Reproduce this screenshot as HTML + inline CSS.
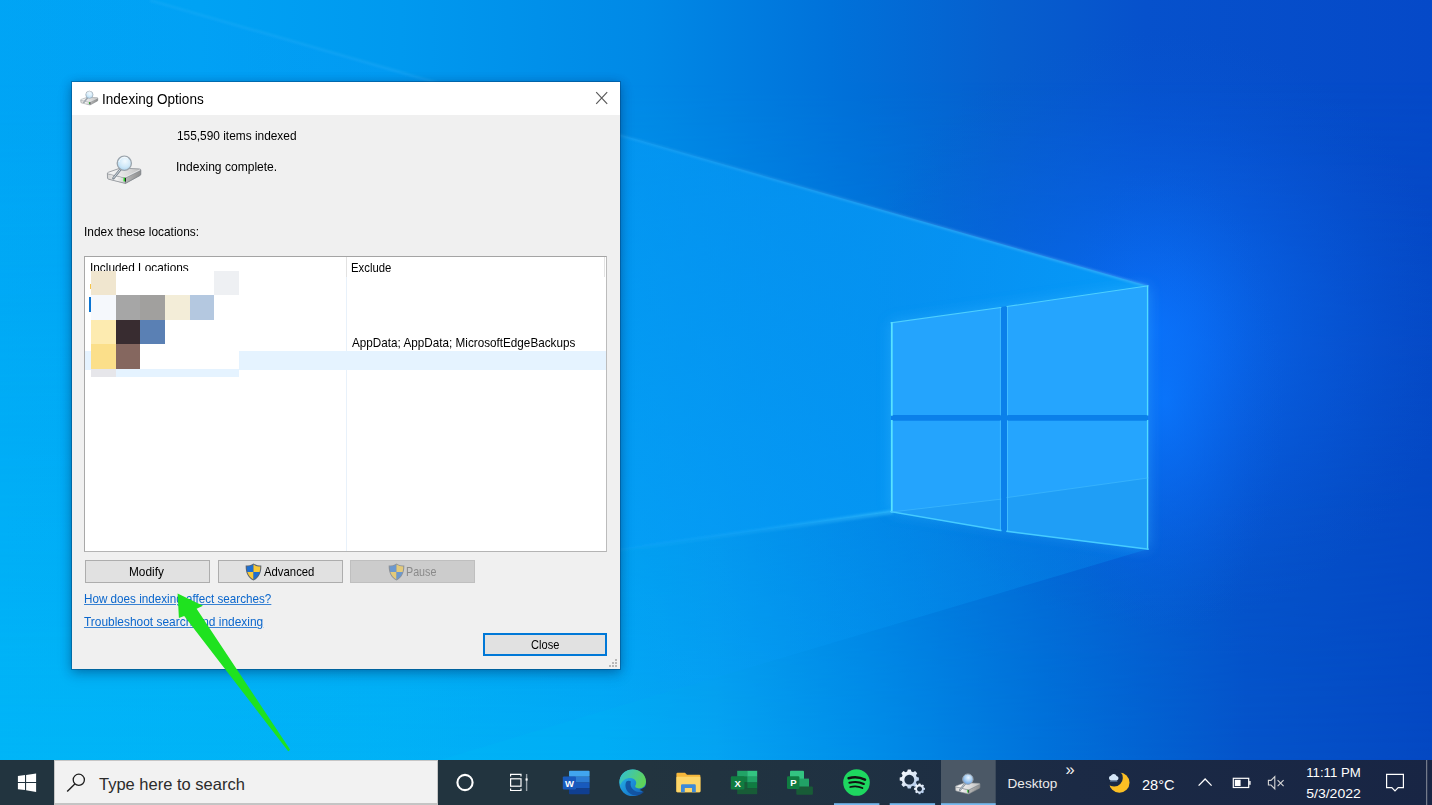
<!DOCTYPE html>
<html lang="en">
<head>
<meta charset="utf-8">
<title>Indexing Options</title>
<style>
html,body{margin:0;padding:0;}
body{width:1432px;height:805px;overflow:hidden;position:relative;background:#0a78dc;font-family:"Liberation Sans",sans-serif;color:#000;}
.abs{position:absolute;}
#wall{position:absolute;left:0;top:0;width:1432px;height:805px;display:block;}
/* ---------- dialog ---------- */
#dlg{position:absolute;left:72px;top:82px;width:548px;height:586.5px;background:#f0f0f0;box-shadow:0 0 0 1px rgba(0,55,105,.38),0 2px 10px rgba(0,40,90,.40),0 5px 14px rgba(0,40,90,.18);}
#ttl{position:absolute;left:-1px;top:-1px;width:548px;height:33px;background:#fff;}
#ttl .cap{position:absolute;left:29.6px;top:9px;font-size:14px;line-height:16px;white-space:nowrap;color:#000;transform-origin:0 50%;transform:scaleX(.968);}
.t{position:absolute;white-space:nowrap;font-size:12.6px;line-height:15px;color:#000;transform-origin:0 50%;}
#list{position:absolute;left:11px;top:173px;width:523px;height:296px;box-sizing:border-box;border:1px solid;border-color:#a4a4a4 #bcbcbc #b4b4b4 #a8a8a8;background:#fff;overflow:hidden;}
.btn{position:absolute;box-sizing:border-box;height:23px;top:477px;width:125px;background:#e1e1e1;border:1px solid #adadad;}
.btn span{position:absolute;white-space:nowrap;font-size:12.6px;line-height:15px;top:4px;transform-origin:0 50%;}
.lnk{color:#0a66cc;text-decoration:underline;text-underline-offset:1px;text-decoration-thickness:1px;text-decoration-color:rgba(10,102,204,.8);}
/* ---------- taskbar ---------- */
#tb{position:absolute;left:0;top:760px;width:1432px;height:45px;background:linear-gradient(90deg,#22343f 0,#22343f 45%,#1f3142 60%,#1b2a45 75%,#182544 100%);}
#srch{position:absolute;left:54px;top:0;width:384px;height:45px;background:#f2f2f2;box-sizing:border-box;border:1px solid #c6c6c6;border-bottom:2px solid #c4c4c4;}
#srch span{position:absolute;left:44px;top:13px;font-size:16.5px;line-height:20px;color:#2b2b2b;white-space:nowrap;}
.tw{position:absolute;color:#fff;white-space:nowrap;}
</style>
</head>
<body>
<!-- WALLPAPER -->
<svg id="wall" viewBox="0 0 1432 805" width="1432" height="805">
<defs>
<linearGradient id="gtop" x1="0" y1="0" x2="1432" y2="0" gradientUnits="userSpaceOnUse">
<stop offset="0" stop-color="#00a5f5"/>
<stop offset="0.14" stop-color="#00a2f4"/>
<stop offset="0.28" stop-color="#0099ef"/>
<stop offset="0.45" stop-color="#0089e6"/>
<stop offset="0.58" stop-color="#0072da"/>
<stop offset="0.70" stop-color="#065fce"/>
<stop offset="0.80" stop-color="#0651cc"/>
<stop offset="1" stop-color="#0549c8"/>
</linearGradient>
<linearGradient id="gray1" x1="150" y1="0" x2="1148" y2="0" gradientUnits="userSpaceOnUse">
<stop offset="0" stop-color="#7fd4ff" stop-opacity="0.10"/>
<stop offset="0.5" stop-color="#7fd4ff" stop-opacity="0.16"/>
<stop offset="1" stop-color="#7fd4ff" stop-opacity="0.40"/>
</linearGradient>
<linearGradient id="gbot" x1="0" y1="0" x2="1432" y2="0" gradientUnits="userSpaceOnUse">
<stop offset="0" stop-color="#00b6f7"/>
<stop offset="0.28" stop-color="#00b4f6"/>
<stop offset="0.42" stop-color="#00aef5"/>
<stop offset="0.50" stop-color="#04a4f2"/>
<stop offset="0.60" stop-color="#0090ea"/>
<stop offset="0.73" stop-color="#0072da"/>
<stop offset="0.87" stop-color="#0454ca"/>
<stop offset="1" stop-color="#0448c2"/>
</linearGradient>
<linearGradient id="abot" x1="0" y1="0" x2="0" y2="805" gradientUnits="userSpaceOnUse">
<stop offset="0.10" stop-color="#fff" stop-opacity="0"/>
<stop offset="0.95" stop-color="#fff" stop-opacity="1"/>
</linearGradient>
<mask id="mbot"><rect width="1432" height="805" fill="url(#abot)"/></mask>
<radialGradient id="glow" cx="1155" cy="330" r="300" gradientUnits="userSpaceOnUse">
<stop offset="0" stop-color="#0a74ff" stop-opacity="0.9"/>
<stop offset="0.35" stop-color="#0a6af2" stop-opacity="0.55"/>
<stop offset="0.7" stop-color="#0a60e6" stop-opacity="0.25"/>
<stop offset="1" stop-color="#0a58d0" stop-opacity="0"/>
</radialGradient>
<linearGradient id="gwall" x1="0" y1="0" x2="1148" y2="0" gradientUnits="userSpaceOnUse">
<stop offset="0" stop-color="#069cf8" stop-opacity="0.05"/>
<stop offset="0.13" stop-color="#069cf8" stop-opacity="0.12"/>
<stop offset="0.54" stop-color="#069cf8" stop-opacity="0.55"/>
<stop offset="1" stop-color="#069cf8" stop-opacity="0.95"/>
</linearGradient>
<linearGradient id="gfloor" x1="0" y1="0" x2="1148" y2="0" gradientUnits="userSpaceOnUse">
<stop offset="0" stop-color="#069cf8" stop-opacity="0.03"/>
<stop offset="0.3" stop-color="#069cf8" stop-opacity="0.08"/>
<stop offset="0.55" stop-color="#069cf8" stop-opacity="0.22"/>
<stop offset="0.8" stop-color="#069cf8" stop-opacity="0.28"/>
<stop offset="1" stop-color="#069cf8" stop-opacity="0.28"/>
</linearGradient>
<filter id="b1" filterUnits="userSpaceOnUse" x="0" y="-10" width="1432" height="320"><feGaussianBlur stdDeviation="0.9"/></filter>
<radialGradient id="glow2" cx="0.5" cy="0.5" r="0.5"><stop offset="0" stop-color="#0a78ff" stop-opacity="0.75"/><stop offset="0.5" stop-color="#0a6cf4" stop-opacity="0.35"/><stop offset="1" stop-color="#0a60e0" stop-opacity="0"/></radialGradient>
<linearGradient id="gfl" x1="893" y1="0" x2="560" y2="0" gradientUnits="userSpaceOnUse"><stop offset="0" stop-color="#4fd0ff" stop-opacity="0.7"/><stop offset="0.4" stop-color="#3cc0ff" stop-opacity="0.3"/><stop offset="1" stop-color="#30b8ff" stop-opacity="0.05"/></linearGradient>
<filter id="b1f" filterUnits="userSpaceOnUse" x="500" y="480" width="450" height="120"><feGaussianBlur stdDeviation="1.6"/></filter>
<filter id="b8" x="-20%" y="-20%" width="140%" height="140%"><feGaussianBlur stdDeviation="7"/></filter>
</defs>
<rect width="1432" height="805" fill="url(#gtop)"/>
<rect width="1432" height="805" fill="url(#gbot)" mask="url(#mbot)"/>
<rect x="800" y="0" width="632" height="700" fill="url(#glow)"/>
<ellipse cx="1165" cy="400" rx="120" ry="240" fill="url(#glow2)"/>
<!-- lit wall -->
<polygon points="1148,286 150,0 0,0 0,637 891,512 1007,531 1148,549" fill="url(#gwall)"/>
<path d="M150 0.4 L1148 286.4" stroke="url(#gray1)" stroke-width="2.4" fill="none" filter="url(#b1)"/>
<!-- lit floor -->
<path d="M893 512 L560 558.6" stroke="url(#gfl)" stroke-width="3" fill="none" filter="url(#b1f)"/>
<polygon points="891,512 0,637 0,805 290,805 620,706 1148,549 1007,531" fill="url(#gfloor)"/>
<!-- logo glow -->
<g filter="url(#b8)" opacity="0.5">
<polygon points="891,323 1148,286 1148,549 891,511" fill="#38b4ff"/>
</g>
<!-- logo panes -->
<polygon points="1000.5,307 1007.2,306 1007.2,531.5 1000.5,530.5" fill="#0a80ea"/>
<polygon points="891,414.8 1148,414.8 1148,420.9 891,420.9" fill="#0a80ea"/>
<polygon points="891,323 1000.8,307.6 1000.8,414.9 891,414.9" fill="#24a4fd"/>
<polygon points="1007,306.6 1148,286 1148,414.9 1007,414.9" fill="#25a5fe"/>
<polygon points="891,420.8 1000.8,420.8 1000.8,530.3 891,511.6" fill="#24a4fd"/>
<polygon points="1007,420.8 1148,420.8 1148,549 1007,531.2" fill="#25a5fe"/>
<polygon points="891.5,512 1000.8,499.2 1000.8,530.3" fill="#1f9ef6"/>
<polygon points="1007,497.6 1148,478 1148,549 1007,531.2" fill="#1f9ef6"/>
<g fill="none" stroke-linecap="square">
<path d="M891.8 323 V414.9 M891.8 420.8 V511.6" stroke="#58e2ff" stroke-width="1.8"/>
<path d="M1007.5 306.6 V414.9 M1007.5 420.8 V531" stroke="#4fc8ff" stroke-width="1" stroke-opacity="0.7"/>
<path d="M1000.4 307.8 V414.9 M1000.4 420.8 V530" stroke="#4fc8ff" stroke-width="0.9" stroke-opacity="0.7"/>
<path d="M1147.6 286.2 V414.9 M1147.6 420.8 V548.8" stroke="#58e2ff" stroke-width="1.4" stroke-opacity="0.9"/>
<path d="M891 511.7 L1000.8 530.4 M1007 531.3 L1148 549.1" stroke="#46ccff" stroke-width="1.5"/>
<path d="M891 322.9 L1000.8 307.5 M1007 306.5 L1148 285.9" stroke="#58d8ff" stroke-width="1.1" stroke-opacity="0.85"/>
<path d="M891.5 512 L1000.8 499.2 M1007 497.6 L1148 478" stroke="#46c0ff" stroke-width="0.9" stroke-opacity="0.6"/>
</g>
</svg>

<!-- DIALOG -->
<div id="dlg"><div class="abs" style="left:1px;top:1px;width:546px;height:584px">
  <div id="ttl">
    <svg class="abs" style="left:5px;top:4.5px" width="25.5" height="21.4" viewBox="0 0 50 42">
<defs>
<linearGradient id="dt" x1="0" y1="0" x2="1" y2="0"><stop offset="0" stop-color="#fafafa"/><stop offset="0.6" stop-color="#dcdcdc"/><stop offset="1" stop-color="#bdbdbd"/></linearGradient>
<linearGradient id="df" x1="0" y1="0" x2="1" y2="0"><stop offset="0" stop-color="#d4d4d4"/><stop offset="0.5" stop-color="#f2f2f2"/><stop offset="1" stop-color="#cfcfcf"/></linearGradient>
<linearGradient id="ds" x1="0" y1="0" x2="1" y2="0"><stop offset="0" stop-color="#b8b8b8"/><stop offset="1" stop-color="#8e8e8e"/></linearGradient>
<radialGradient id="dl" cx="0.55" cy="0.35" r="0.7"><stop offset="0" stop-color="#f2faff"/><stop offset="0.6" stop-color="#cfe8f8"/><stop offset="1" stop-color="#a9d3f0"/></radialGradient>
</defs>
<path d="M7.6 30.6 L7 26 Q7 25 8.5 24.4 L19 20.6 Q20.5 20.2 22 20.3 L39 21 Q41 21.2 41 22.6 L41 26 Q41 27 39.6 27.8 L27 35 Q25.6 35.8 24 35.4 L9 31.6 Q7.8 31.3 7.6 30.6 Z" fill="#9a9a9a" opacity="0.55"/>
<path d="M7.4 25.6 L25.4 29.8 L25.4 35.4 L8.6 31.2 Q7.6 30.9 7.5 30 Z" fill="url(#df)" stroke="#8b9197" stroke-width="0.8" stroke-linejoin="round"/>
<path d="M25.4 29.8 L40.8 22 L40.8 26.2 Q40.8 27 40 27.5 L25.4 35.4 Z" fill="url(#ds)" stroke="#7f858b" stroke-width="0.8" stroke-linejoin="round"/>
<path d="M7.4 25.4 Q7.2 24.8 8.6 24.2 L19 20.5 Q20.3 20.1 22 20.2 L39.2 20.9 Q40.9 21 40.8 22 L25.4 29.8 Z" fill="url(#dt)" stroke="#8b9197" stroke-width="0.8" stroke-linejoin="round"/>
<path d="M8.2 25.3 L25.3 29.3 L40.2 21.8" fill="none" stroke="#fff" stroke-width="0.7" opacity="0.9"/>
<rect x="23.5" y="29.6" width="1.5" height="3.8" fill="#22d422"/><rect x="25" y="29.8" width="1" height="3.8" fill="#222"/>
<path d="M20.6 21.2 L13.4 30.2" stroke="#7c8791" stroke-width="2.6" stroke-linecap="round"/>
<path d="M20.4 21.4 L13.6 29.9" stroke="#cfd6dc" stroke-width="1" stroke-linecap="round"/>
<circle cx="24.3" cy="15.2" r="7.1" fill="url(#dl)" stroke="#9aa3ab" stroke-width="1.3"/>
<path d="M19 14 A5.6 5.6 0 0 1 28 10.4" fill="none" stroke="#fff" stroke-width="1" opacity="0.8"/>
</svg>
    <span class="cap">Indexing Options</span>
    <svg class="abs" style="left:523px;top:9px" width="14" height="14" viewBox="0 0 14 14"><path d="M1.2 1.2 L12.2 12.8 M12.2 1.2 L1.2 12.8" stroke="#5a5a5a" stroke-width="1.2" fill="none"/></svg>
  </div>
  <svg class="abs" style="left:27px;top:65px" width="50" height="42" viewBox="0 0 50 42">

<path d="M7.6 30.6 L7 26 Q7 25 8.5 24.4 L19 20.6 Q20.5 20.2 22 20.3 L39 21 Q41 21.2 41 22.6 L41 26 Q41 27 39.6 27.8 L27 35 Q25.6 35.8 24 35.4 L9 31.6 Q7.8 31.3 7.6 30.6 Z" fill="#9a9a9a" opacity="0.55"/>
<path d="M7.4 25.6 L25.4 29.8 L25.4 35.4 L8.6 31.2 Q7.6 30.9 7.5 30 Z" fill="url(#df)" stroke="#8b9197" stroke-width="0.8" stroke-linejoin="round"/>
<path d="M25.4 29.8 L40.8 22 L40.8 26.2 Q40.8 27 40 27.5 L25.4 35.4 Z" fill="url(#ds)" stroke="#7f858b" stroke-width="0.8" stroke-linejoin="round"/>
<path d="M7.4 25.4 Q7.2 24.8 8.6 24.2 L19 20.5 Q20.3 20.1 22 20.2 L39.2 20.9 Q40.9 21 40.8 22 L25.4 29.8 Z" fill="url(#dt)" stroke="#8b9197" stroke-width="0.8" stroke-linejoin="round"/>
<path d="M8.2 25.3 L25.3 29.3 L40.2 21.8" fill="none" stroke="#fff" stroke-width="0.7" opacity="0.9"/>
<rect x="23.5" y="29.6" width="1.5" height="3.8" fill="#22d422"/><rect x="25" y="29.8" width="1" height="3.8" fill="#222"/>
<path d="M20.6 21.2 L13.4 30.2" stroke="#7c8791" stroke-width="2.6" stroke-linecap="round"/>
<path d="M20.4 21.4 L13.6 29.9" stroke="#cfd6dc" stroke-width="1" stroke-linecap="round"/>
<circle cx="24.3" cy="15.2" r="7.1" fill="url(#dl)" stroke="#9aa3ab" stroke-width="1.3"/>
<path d="M19 14 A5.6 5.6 0 0 1 28 10.4" fill="none" stroke="#fff" stroke-width="1" opacity="0.8"/>
</svg>
  <div class="t" style="left:104px;top:45.5px;transform:scaleX(.943)">155,590 items indexed</div>
  <div class="t" style="left:103px;top:77px;transform:scaleX(.957)">Indexing complete.</div>
  <div class="t" style="left:10.7px;top:142px;transform:scaleX(.944)">Index these locations:</div>
  <div id="list">
    <div class="abs" style="left:261px;top:0;width:1px;height:294px;background:#e8f1fa"></div>
    <div class="abs" style="left:261px;top:0;width:1px;height:20px;background:#e2e2e2"></div>
    <div class="abs" style="left:519px;top:0;width:1px;height:20px;background:#e2e2e2"></div>
    <div class="abs" style="left:0;top:94px;width:521px;height:18.5px;background:#e5f3ff"></div>
    <div class="t" style="left:4.5px;top:4px;transform:scaleX(.94)">Included Locations</div>
    <div class="t" style="left:265.7px;top:4px;transform:scaleX(.90)">Exclude</div>
    <div class="t" style="left:267px;top:79px;transform:scaleX(.93)">AppData; AppData; MicrosoftEdgeBackups</div>
    <div class="abs" style="left:4.5px;top:27px;width:2px;height:5px;background:#f6c54a"></div>
    <div class="abs" style="left:4px;top:40px;width:3px;height:15px;background:#0a74d2"></div>
    <div class="abs" style="left:6.1px;top:13.6px;width:25.0px;height:24.7px;background:#f0e6cf"></div>
    <div class="abs" style="left:30.8px;top:13.6px;width:24.5px;height:24.7px;background:#ffffff"></div>
    <div class="abs" style="left:55.0px;top:13.6px;width:25.2px;height:24.7px;background:#ffffff"></div>
    <div class="abs" style="left:79.9px;top:13.6px;width:24.9px;height:24.7px;background:#ffffff"></div>
    <div class="abs" style="left:104.5px;top:13.6px;width:24.9px;height:24.7px;background:#ffffff"></div>
    <div class="abs" style="left:129.1px;top:13.6px;width:25.0px;height:24.7px;background:#eef0f3"></div>
    <div class="abs" style="left:6.1px;top:38.0px;width:25.0px;height:24.9px;background:#f5f8fc"></div>
    <div class="abs" style="left:30.8px;top:38.0px;width:24.5px;height:24.9px;background:#a6a6a6"></div>
    <div class="abs" style="left:55.0px;top:38.0px;width:25.2px;height:24.9px;background:#a1a09e"></div>
    <div class="abs" style="left:79.9px;top:38.0px;width:24.9px;height:24.9px;background:#f3edd8"></div>
    <div class="abs" style="left:104.5px;top:38.0px;width:24.9px;height:24.9px;background:#b4c8e0"></div>
    <div class="abs" style="left:129.1px;top:38.0px;width:25.0px;height:24.9px;background:#ffffff"></div>
    <div class="abs" style="left:6.1px;top:62.6px;width:25.0px;height:24.8px;background:#fdebb0"></div>
    <div class="abs" style="left:30.8px;top:62.6px;width:24.5px;height:24.8px;background:#382c30"></div>
    <div class="abs" style="left:55.0px;top:62.6px;width:25.2px;height:24.8px;background:#5a80b4"></div>
    <div class="abs" style="left:79.9px;top:62.6px;width:24.9px;height:24.8px;background:#ffffff"></div>
    <div class="abs" style="left:104.5px;top:62.6px;width:24.9px;height:24.8px;background:#ffffff"></div>
    <div class="abs" style="left:129.1px;top:62.6px;width:25.0px;height:24.8px;background:#ffffff"></div>
    <div class="abs" style="left:6.1px;top:87.1px;width:25.0px;height:25.1px;background:#fbdf8a"></div>
    <div class="abs" style="left:30.8px;top:87.1px;width:24.5px;height:25.1px;background:#85675f"></div>
    <div class="abs" style="left:55.0px;top:87.1px;width:25.2px;height:25.1px;background:#ffffff"></div>
    <div class="abs" style="left:79.9px;top:87.1px;width:24.9px;height:25.1px;background:#ffffff"></div>
    <div class="abs" style="left:104.5px;top:87.1px;width:24.9px;height:25.1px;background:#ffffff"></div>
    <div class="abs" style="left:129.1px;top:87.1px;width:25.0px;height:25.1px;background:#ffffff"></div>
    <div class="abs" style="left:6.1px;top:111.9px;width:25.0px;height:8.2px;background:#e6e6ea"></div>
    <div class="abs" style="left:30.8px;top:111.9px;width:24.5px;height:8.2px;background:#e5f3ff"></div>
    <div class="abs" style="left:55.0px;top:111.9px;width:25.2px;height:8.2px;background:#e5f3ff"></div>
    <div class="abs" style="left:79.9px;top:111.9px;width:24.9px;height:8.2px;background:#e5f3ff"></div>
    <div class="abs" style="left:104.5px;top:111.9px;width:24.9px;height:8.2px;background:#e5f3ff"></div>
    <div class="abs" style="left:129.1px;top:111.9px;width:25.0px;height:8.2px;background:#e5f3ff"></div>
  </div>
  <div class="btn" style="left:12px;"><span style="left:43px;transform:scaleX(.94)">Modify</span></div>
  <div class="btn" style="left:145px;"><svg class="abs" style="left:26px;top:2px;opacity:1" width="17" height="18" viewBox="0 0 17 18">
<path d="M8.5 0.4 C6.4 1.9 3.6 2.6 0.7 2.6 C0.5 9.2 2.6 14.6 8.5 17.6 C14.4 14.6 16.5 9.2 16.3 2.6 C13.4 2.6 10.6 1.9 8.5 0.4 Z" fill="#5b6470"/>
<path d="M8.5 1.6 C6.5 2.9 4.2 3.5 1.7 3.6 C1.7 5.6 1.9 7.4 2.4 9 L8.5 9 Z" fill="#1e6fd2"/>
<path d="M8.5 1.6 C10.5 2.9 12.8 3.5 15.3 3.6 C15.3 5.6 15.1 7.4 14.6 9 L8.5 9 Z" fill="#f7c938"/>
<path d="M2.4 9 C3.3 12.2 5.2 14.7 8.5 16.4 L8.5 9 Z" fill="#f7c938"/>
<path d="M14.6 9 C13.7 12.2 11.8 14.7 8.5 16.4 L8.5 9 Z" fill="#1e6fd2"/>
</svg><span style="left:45px;transform:scaleX(.90)">Advanced</span></div>
  <div class="btn" style="left:277px;background:#ccc;border-color:#bfbfbf;"><svg class="abs" style="left:37px;top:2px;opacity:0.55" width="17" height="18" viewBox="0 0 17 18">
<path d="M8.5 0.4 C6.4 1.9 3.6 2.6 0.7 2.6 C0.5 9.2 2.6 14.6 8.5 17.6 C14.4 14.6 16.5 9.2 16.3 2.6 C13.4 2.6 10.6 1.9 8.5 0.4 Z" fill="#5b6470"/>
<path d="M8.5 1.6 C6.5 2.9 4.2 3.5 1.7 3.6 C1.7 5.6 1.9 7.4 2.4 9 L8.5 9 Z" fill="#1e6fd2"/>
<path d="M8.5 1.6 C10.5 2.9 12.8 3.5 15.3 3.6 C15.3 5.6 15.1 7.4 14.6 9 L8.5 9 Z" fill="#f7c938"/>
<path d="M2.4 9 C3.3 12.2 5.2 14.7 8.5 16.4 L8.5 9 Z" fill="#f7c938"/>
<path d="M14.6 9 C13.7 12.2 11.8 14.7 8.5 16.4 L8.5 9 Z" fill="#1e6fd2"/>
</svg><span style="left:55px;color:#8a8a8a;transform:scaleX(.85)">Pause</span></div>
  <div class="t lnk" style="left:11px;top:509px;transform:scaleX(.927)">How does indexing affect searches?</div>
  <div class="t lnk" style="left:11px;top:532px;transform:scaleX(.947)">Troubleshoot search and indexing</div>
  <div class="btn" style="left:410px;top:550px;width:124px;border:2px solid #0078d7;"><span style="left:45.5px;top:3px;transform:scaleX(.88)">Close</span></div>
  <svg class="abs" style="left:535px;top:575px" width="10" height="10" viewBox="0 0 10 10"><g fill="#b8b8b8"><rect x="7" y="1" width="2" height="2"/><rect x="4" y="4" width="2" height="2"/><rect x="7" y="4" width="2" height="2"/><rect x="1" y="7" width="2" height="2"/><rect x="4" y="7" width="2" height="2"/><rect x="7" y="7" width="2" height="2"/></g></svg>
</div></div>
<!-- ARROW -->
<svg class="abs" style="left:0;top:0" width="1432" height="805" viewBox="0 0 1432 805">
<polygon points="177.6,593.6 203,605.8 196.6,608.8 290.2,749.8 288.2,751.2 184.2,616 178.9,618" fill="#1fe21f"/>
</svg>

<!-- TASKBAR -->
<div id="tb">
  <!-- start -->
  <svg class="abs" style="left:0;top:0" width="54" height="45" viewBox="0 760 54 45"><g fill="#fff">
  <polygon points="17.9,776 25,775.05 25,782.1 17.9,782.1"/><polygon points="26.1,774.9 36.1,773.5 36.1,782.1 26.1,782.1"/>
  <polygon points="17.9,783.1 25,783.1 25,790.1 17.9,789.2"/><polygon points="26.1,783.1 36.1,783.1 36.1,792 26.1,790.3"/></g></svg>
  <div id="srch">
    <svg class="abs" style="left:-1px;top:0" width="45" height="44" viewBox="54 761 45 44"><circle cx="78.8" cy="779.8" r="5.6" fill="none" stroke="#1c1c1c" stroke-width="1.3"/><path d="M74.8 784 L67.2 791.4" stroke="#1c1c1c" stroke-width="1.4" fill="none"/></svg>
    <span>Type here to search</span>
  </div>
  <!-- icons drawn in absolute page coords -->
  <svg class="abs" style="left:438px;top:0" width="994" height="45" viewBox="438 760 994 45">
  <defs>
   <linearGradient id="edg" x1="0" y1="0" x2="1" y2="1"><stop offset="0" stop-color="#2cc1e8"/><stop offset="0.5" stop-color="#1b8fd8"/><stop offset="1" stop-color="#1559b4"/></linearGradient>
   <linearGradient id="edg2" x1="0" y1="0" x2="1" y2="0.4"><stop offset="0" stop-color="#2fbfd9"/><stop offset="1" stop-color="#5fd35a"/></linearGradient>
   <linearGradient id="gear" x1="0" y1="0" x2="1" y2="1"><stop offset="0" stop-color="#ffffff"/><stop offset="0.6" stop-color="#d6e3f4"/><stop offset="1" stop-color="#8fb2e0"/></linearGradient>
  </defs>
  <!-- cortana -->
  <circle cx="465" cy="782.5" r="7.6" fill="none" stroke="#fff" stroke-width="2.1"/>
  <!-- task view -->
  <g fill="none" stroke="#fff" stroke-width="1.2"><rect x="510.6" y="778.8" width="10.4" height="7.4"/><path d="M510.6 776.6 V774.4 H521 V776.6 M510.6 788.4 V790.5 H521 V788.4"/></g>
  <path d="M526.6 774 V791" stroke="#9aa3aa" stroke-width="1.4"/><rect x="525.6" y="778.4" width="2" height="2.2" fill="#fff"/>
  <!-- word -->
  <rect x="569" y="770.8" width="20.6" height="6" rx="1" fill="#41a5ee"/><rect x="569" y="776.6" width="20.6" height="6" fill="#2b7cd3"/><rect x="569" y="782.4" width="20.6" height="6" fill="#185abd"/><rect x="569" y="788.2" width="20.6" height="6" rx="1" fill="#103f91"/>
  <rect x="562.8" y="776.4" width="13.2" height="13" rx="1.2" fill="#185abd"/>
  <text x="569.4" y="786.6" font-family="Liberation Sans, sans-serif" font-size="9.5" font-weight="bold" fill="#fff" text-anchor="middle">W</text>
  <!-- edge -->
  <circle cx="632.6" cy="782.8" r="13.3" fill="url(#edg)"/>
  <path d="M619.6 780 C621 772.5 627 769.4 633 769.5 C640.5 769.6 646 775 646 781.5 C646 786 642.5 788.4 639 788.4 C636 788.4 634.6 787 635.4 785.6 C636.6 784 636.6 781.6 635 780 C632.6 777.6 628 777.4 624.6 779.6 C622.6 781 621 783 620.4 785 C619.6 783.4 619.4 781.6 619.6 780 Z" fill="url(#edg2)"/>
  <path d="M626.4 781.4 C624.6 784.6 625.4 789.4 628.6 792.4 C631 794.6 634 795.6 637 795.4 C640.6 795 643.6 793 645 790.4 C642 792.4 637.6 792.4 634.4 790.4 C631 788.2 629.8 784.4 631 781.4 C629.6 780.4 627.6 780.4 626.4 781.4 Z" fill="#124e9c" opacity="0.85"/>
  <polygon points="646.6,786 639.6,790 645.4,792.2" fill="#22343f"/>
  <!-- explorer -->
  <path d="M676.4 774 Q676.4 772.8 677.6 772.8 H685 L687 774.8 H699.2 Q700.4 774.8 700.4 776 V791 Q700.4 792.2 699.2 792.2 H677.6 Q676.4 792.2 676.4 791 Z" fill="#f5b73b"/>
  <rect x="676.4" y="776.8" width="24" height="15.4" rx="1" fill="#fcd669"/>
  <path d="M681 792.2 V785.4 Q681 784.2 682.2 784.2 H694.6 Q695.8 784.2 695.8 785.4 V792.2 H692 V788 H684.8 V792.2 Z" fill="#3d8ad8"/>
  <!-- excel -->
  <rect x="737.2" y="770.8" width="10" height="6" fill="#21a366"/><rect x="747.2" y="770.8" width="10" height="6" fill="#33c481"/>
  <rect x="737.2" y="776.6" width="10" height="6" fill="#107c41"/><rect x="747.2" y="776.6" width="10" height="6" fill="#21a366"/>
  <rect x="737.2" y="782.4" width="10" height="6" fill="#185c37"/><rect x="747.2" y="782.4" width="10" height="6" fill="#107c41"/>
  <rect x="737.2" y="788.2" width="20" height="6" fill="#185c37"/>
  <rect x="730.8" y="776.2" width="13.6" height="13.2" rx="1.2" fill="#107c41"/>
  <text x="737.6" y="786.5" font-family="Liberation Sans, sans-serif" font-size="9.5" font-weight="bold" fill="#fff" text-anchor="middle">X</text>
  <!-- project -->
  <rect x="790" y="770.8" width="14" height="9" rx="1" fill="#33c481"/><rect x="798.2" y="778.6" width="10.8" height="8.8" fill="#21a366"/><rect x="796.3" y="786.4" width="16.6" height="8.4" rx="1" fill="#185c37"/>
  <rect x="787" y="776.2" width="12.4" height="12.8" rx="1.2" fill="#107c41"/>
  <text x="793.3" y="786.2" font-family="Liberation Sans, sans-serif" font-size="9.5" font-weight="bold" fill="#fff" text-anchor="middle">P</text>
  <!-- spotify -->
  <circle cx="856.5" cy="782.5" r="13.3" fill="#1ed760"/>
  <g fill="none" stroke="#111" stroke-linecap="round"><path d="M848.6 778.2 Q857 775.6 865 779.6" stroke-width="2.5"/><path d="M849.4 782.8 Q857 780.6 863.8 784" stroke-width="2.1"/><path d="M850.2 787 Q856.6 785.2 862.4 788" stroke-width="1.8"/></g>
  <!-- settings gears -->
  <g fill="url(#gear)">
  <path fill-rule="evenodd" d="M909.3 769.4 l1.5 0 .6 2.2 1.7 .7 2 -1.2 2.1 2.1 -1.2 2 .7 1.7 2.2 .6 0 3 -2.2 .6 -.7 1.7 1.2 2 -2.1 2.1 -2 -1.2 -1.7 .7 -.6 2.2 -3 0 -.6 -2.2 -1.7 -.7 -2 1.2 -2.1 -2.1 1.2 -2 -.7 -1.7 -2.2 -.6 0 -3 2.2 -.6 .7 -1.7 -1.2 -2 2.1 -2.1 2 1.2 1.7 -.7 .6 -2.2 z M909.3 774.8 a4.9 4.9 0 1 0 0.01 0 z"/>
  <path fill-rule="evenodd" d="M919.5 783.4 l.9 0 .4 1.2 .9 .4 1.1 -.6 1.2 1.2 -.6 1.1 .4 .9 1.2 .4 0 1.7 -1.2 .4 -.4 .9 .6 1.1 -1.2 1.2 -1.1 -.6 -.9 .4 -.4 1.2 -1.7 0 -.4 -1.2 -.9 -.4 -1.1 .6 -1.2 -1.2 .6 -1.1 -.4 -.9 -1.2 -.4 0 -1.7 1.2 -.4 .4 -.9 -.6 -1.1 1.2 -1.2 1.1 .6 .9 -.4 .4 -1.2 z M919.5 786.4 a2.5 2.5 0 1 0 0.01 0 z"/>
  </g>
  <!-- active app bg -->
  <rect x="941" y="760" width="54.7" height="45" fill="#4b5866"/>
  <!-- indicators -->
  <g fill="#76b9ed"><rect x="834" y="803.2" width="45.4" height="1.8"/><rect x="889.7" y="803.2" width="45.4" height="1.8"/><rect x="941" y="803.2" width="54.7" height="1.8"/></g>
  <!-- desktop toolbar -->
  <text x="1007.6" y="788" font-family="Liberation Sans, sans-serif" font-size="13.6" fill="#ececec" textLength="49.6" lengthAdjust="spacingAndGlyphs">Desktop</text>
  <text x="1065.4" y="774.6" font-family="Liberation Sans, sans-serif" font-size="16.5" fill="#f0f0f0">»</text>
  <!-- weather -->
  <circle cx="1119.4" cy="782.7" r="10.1" fill="#fbbf24"/>
  <circle cx="1114.2" cy="777.9" r="8.6" fill="#1a2944"/>
  <path d="M1110.8 780.4 H1116.8 A2.3 2.3 0 0 0 1116.6 775.9 A3.1 3.1 0 0 0 1110.9 775.7 A2.4 2.4 0 0 0 1110.8 780.4 Z" fill="#d4e6f8"/>
  <path d="M1110 781.2 H1117.4" stroke="#8fb6e0" stroke-width="0.8" opacity="0.7"/>
  <text x="1142" y="789.7" font-family="Liberation Sans, sans-serif" font-size="14.6" fill="#fff" textLength="32.6" lengthAdjust="spacingAndGlyphs">28°C</text>
  <!-- tray -->
  <path d="M1198.6 785.6 L1205.1 779 L1211.6 785.6" fill="none" stroke="#fff" stroke-width="1.3"/>
  <rect x="1233.3" y="778.3" width="15.4" height="9.2" fill="none" stroke="#fff" stroke-width="1.2"/><rect x="1249.2" y="781" width="1.4" height="3.8" fill="#fff"/><rect x="1234.8" y="779.8" width="5.8" height="6.2" fill="#fff"/>
  <path d="M1268.4 780.4 H1271 L1274.8 776.6 V788.8 L1271 785 H1268.4 Z" fill="none" stroke="#d6d6d6" stroke-width="1.1"/>
  <path d="M1277.6 780.2 L1283.6 786.2 M1283.6 780.2 L1277.6 786.2" stroke="#d6d6d6" stroke-width="1.1" fill="none"/>
  <text x="1306.2" y="777.2" font-family="Liberation Sans, sans-serif" font-size="12.4" fill="#fff" textLength="54.6" lengthAdjust="spacingAndGlyphs">11:11 PM</text>
  <text x="1306.2" y="797.9" font-family="Liberation Sans, sans-serif" font-size="12.4" fill="#fff" textLength="54.6" lengthAdjust="spacingAndGlyphs">5/3/2022</text>
  <path d="M1386.6 774.4 H1403.4 V787.6 H1398.2 L1395 790.8 L1391.8 787.6 H1386.6 Z" fill="none" stroke="#fff" stroke-width="1.2"/>
  <rect x="1426.2" y="760" width="1" height="45" fill="#8a909c"/>
  </svg>
  <svg class="abs" style="left:949.9px;top:8.2px" width="36.8" height="30.9" viewBox="0 0 50 42">
<defs>
<linearGradient id="et" x1="0" y1="0" x2="1" y2="0"><stop offset="0" stop-color="#fafafa"/><stop offset="0.6" stop-color="#dcdcdc"/><stop offset="1" stop-color="#bdbdbd"/></linearGradient>
<linearGradient id="ef" x1="0" y1="0" x2="1" y2="0"><stop offset="0" stop-color="#d4d4d4"/><stop offset="0.5" stop-color="#f2f2f2"/><stop offset="1" stop-color="#cfcfcf"/></linearGradient>
<linearGradient id="es" x1="0" y1="0" x2="1" y2="0"><stop offset="0" stop-color="#b8b8b8"/><stop offset="1" stop-color="#8e8e8e"/></linearGradient>
<radialGradient id="el" cx="0.55" cy="0.35" r="0.7"><stop offset="0" stop-color="#eaf5ff"/><stop offset="0.5" stop-color="#a6cdf2"/><stop offset="1" stop-color="#5a94dc"/></radialGradient>
</defs>
<path d="M7.4 25.6 L25.4 29.8 L25.4 35.4 L8.6 31.2 Q7.6 30.9 7.5 30 Z" fill="url(#ef)" stroke="#8b9197" stroke-width="0.8" stroke-linejoin="round"/>
<path d="M25.4 29.8 L40.8 22 L40.8 26.2 Q40.8 27 40 27.5 L25.4 35.4 Z" fill="url(#es)" stroke="#7f858b" stroke-width="0.8" stroke-linejoin="round"/>
<path d="M7.4 25.4 Q7.2 24.8 8.6 24.2 L19 20.5 Q20.3 20.1 22 20.2 L39.2 20.9 Q40.9 21 40.8 22 L25.4 29.8 Z" fill="url(#et)" stroke="#8b9197" stroke-width="0.8" stroke-linejoin="round"/>
<rect x="23.5" y="29.6" width="1.5" height="3.8" fill="#22d422"/><rect x="25" y="29.8" width="1" height="3.8" fill="#222"/>
<path d="M20.6 21.2 L13.4 30.2" stroke="#7c8791" stroke-width="2.6" stroke-linecap="round"/>
<path d="M20.4 21.4 L13.6 29.9" stroke="#cfd6dc" stroke-width="1" stroke-linecap="round"/>
<circle cx="24.3" cy="15.2" r="7.1" fill="url(#el)" stroke="#9aa3ab" stroke-width="1.3"/>
</svg>
</div>
</body>
</html>
